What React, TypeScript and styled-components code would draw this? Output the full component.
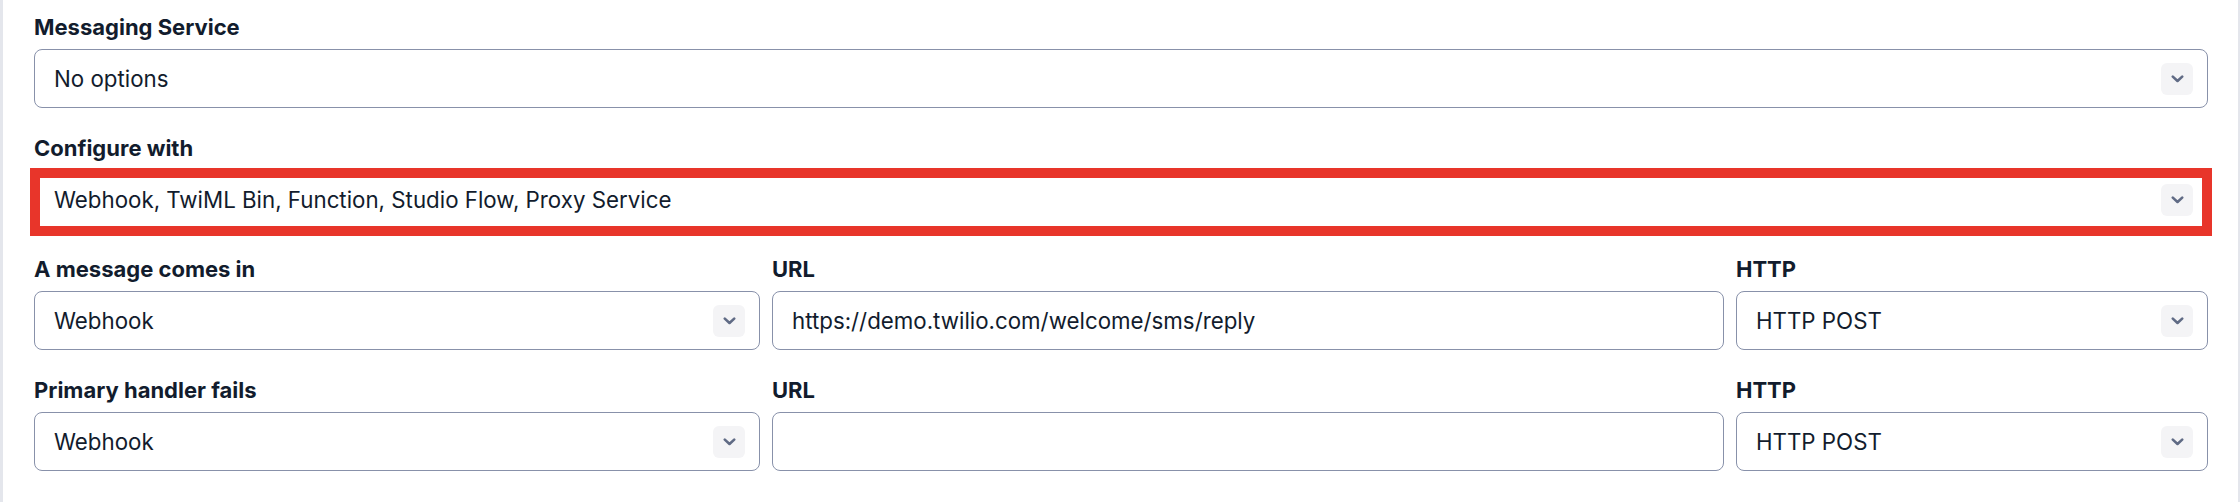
import styled, { createGlobalStyle, css } from "styled-components";

const GlobalStyle = createGlobalStyle`
  html, body {
    margin:0;
    padding:0;
    background:#e4e6ec;
  }
  body{
    font-family:Inter, "Noto Sans", sans-serif;
    color:#121c2d;
  }
`;

const Panel = styled.div`
  margin:0 2px 0 3px;
  min-height:502px;
  box-sizing:border-box;
  background:#ffffff;
  padding:13px 30px 0 31px;
  display:flex;
  flex-direction:column;
  gap:26px;
`;

const Row = styled.div`
  display:grid;
  grid-template-columns:726fr 952fr 472fr;
  column-gap:12px;
`;

const Field = styled.div`
  display:flex;
  flex-direction:column;
  min-width:0;
`;

const Label = styled.label`
  font-size:22px;
  line-height:28px;
  font-weight:700;
  margin-bottom:8px;
`;

const controlBox = css`
  box-sizing:border-box;
  height:59px;
  border:1.5px solid #8891aa;
  border-radius:8px;
  background:#fff;
  font-size:22.3px;
  color:#121c2d;
  padding:0 14px 0 19px;
  display:flex;
  align-items:center;
`;

const SelectBox = styled.div<{ $flagged?: boolean }>`
  ${controlBox};
  position:relative;
  justify-content:space-between;

  ${({ $flagged }) => $flagged && css`
    &::after{
      content:"";
      position:absolute;
      top:-3px;
      left:-5px;
      right:-5px;
      bottom:-8px;
      border:10px solid #e8352a;
      pointer-events:none;
    }
  `}
`;

const TextBox = styled.div`
  ${controlBox};
`;

const Value = styled.span`
  white-space:nowrap;
  overflow:hidden;
  text-overflow:ellipsis;
`;

const Caret = styled.span`
  flex:none;
  width:32px;
  height:32px;
  border-radius:6px;
  background:#f4f4f6;
  display:flex;
  align-items:center;
  justify-content:center;
`;

const Chevron = () => (
  <svg width="13" height="8" viewBox="0 0 13 8">
    <path
      d="M1.8 1.6 L6.5 6 L11.2 1.6"
      fill="none"
      stroke="#606b85"
      strokeWidth="2.6"
      strokeLinecap="round"
      strokeLinejoin="round"
    />
  </svg>
);

const Select = ({ value, flagged }: { value: string; flagged?: boolean }) => (
  <SelectBox $flagged={flagged}>
    <Value>{value}</Value>
    <Caret>
      <Chevron />
    </Caret>
  </SelectBox>
);

const handlers = [
  { label: "A message comes in", type: "Webhook", url: "https://demo.twilio.com/welcome/sms/reply", method: "HTTP POST" },
  { label: "Primary handler fails", type: "Webhook", url: "", method: "HTTP POST" },
];

const App = () => {
  return (
    <>
      <GlobalStyle />
      <Panel>
        <Field>
          <Label>Messaging Service</Label>
          <Select value="No options" />
        </Field>

        <Field>
          <Label>Configure with</Label>
          <Select value="Webhook, TwiML Bin, Function, Studio Flow, Proxy Service" flagged />
        </Field>

        {handlers.map((h) => (
          <Row key={h.label}>
            <Field>
              <Label>{h.label}</Label>
              <Select value={h.type} />
            </Field>
            <Field>
              <Label>URL</Label>
              <TextBox>
                <Value>{h.url}</Value>
              </TextBox>
            </Field>
            <Field>
              <Label>HTTP</Label>
              <Select value={h.method} />
            </Field>
          </Row>
        ))}
      </Panel>
    </>
  );
};

export default App;
